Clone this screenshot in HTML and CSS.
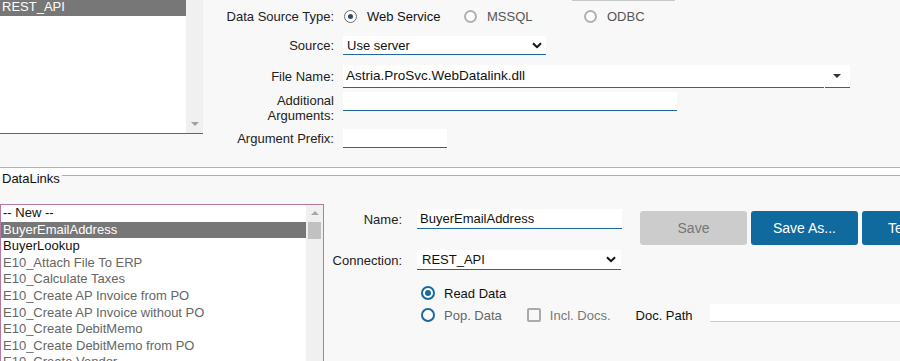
FILE: index.html
```html
<!DOCTYPE html>
<html>
<head>
<meta charset="utf-8">
<link rel="stylesheet" href="styles.css">
</head>
<body>
<div class="top">
  <div class="srclist">
    <div class="opts"><div class="opt sel">REST_API</div></div>
    <div class="sb sb-bottom"><span class="tri-down"></span></div>
  </div>
  <div class="form">
    <div class="frow r0"><div class="topline"></div></div>
    <div class="frow r1">
      <span class="lab">Data Source Type:</span>
      <div class="radios">
        <span class="ritem"><span class="radio on"></span><span class="rtext dark">Web Service</span></span>
        <span class="ritem"><span class="radio"></span><span class="rtext">MSSQL</span></span>
        <span class="ritem"><span class="radio"></span><span class="rtext">ODBC</span></span>
      </div>
    </div>
    <div class="frow r2">
      <span class="lab">Source:</span>
      <div class="selbox w203"><span>Use server</span>
        <svg class="chev" width="10" height="7" viewBox="0 0 10 7"><path d="M1 1.2 L5 5.2 L9 1.2" fill="none" stroke="#111" stroke-width="2"/></svg>
      </div>
    </div>
    <div class="frow r3">
      <span class="lab">File Name:</span>
      <div class="combo">
        <div class="cinp">Astria.ProSvc.WebDatalink.dll</div>
        <div class="cbtn"><span class="tri-dark"></span></div>
      </div>
    </div>
    <div class="frow r4">
      <span class="lab two">Additional<br>Arguments:</span>
      <div class="inp w334"></div>
    </div>
    <div class="frow r5">
      <span class="lab">Argument Prefix:</span>
      <div class="inp w104"></div>
    </div>
  </div>
</div>

<div class="divider"></div>
<div class="fshead"><span class="legend">DataLinks</span><span class="fsline"></span></div>

<div class="lower">
  <div class="dllist">
    <div class="opts">
      <div class="opt dark">-- New --</div>
      <div class="opt sel">BuyerEmailAddress</div>
      <div class="opt dark">BuyerLookup</div>
      <div class="opt">E10_Attach File To ERP</div>
      <div class="opt">E10_Calculate Taxes</div>
      <div class="opt">E10_Create AP Invoice from PO</div>
      <div class="opt">E10_Create AP Invoice without PO</div>
      <div class="opt">E10_Create DebitMemo</div>
      <div class="opt">E10_Create DebitMemo from PO</div>
      <div class="opt">E10_Create Vendor</div>
    </div>
    <div class="sb">
      <span class="tri-up"></span>
      <span class="thumb"></span>
    </div>
  </div>
  <div class="rp">
    <div class="rtop">
      <div class="fields">
        <span class="lab2">Name:</span>
        <div class="inp nameinp">BuyerEmailAddress</div>
        <span class="lab2">Connection:</span>
        <div class="selbox conn"><span>REST_API</span>
          <svg class="chev" width="10" height="7" viewBox="0 0 10 7"><path d="M1 1.2 L5 5.2 L9 1.2" fill="none" stroke="#111" stroke-width="2"/></svg>
        </div>
      </div>
      <div class="btns">
        <button class="btn dis">Save</button>
        <button class="btn pri">Save As...</button>
        <button class="btn pri test">Test</button>
      </div>
    </div>
    <div class="opts2">
      <div class="orow">
        <span class="radio blue on"></span><span class="otext dark">Read Data</span>
      </div>
      <div class="orow">
        <span class="radio blue"></span><span class="otext">Pop. Data</span>
        <span class="check"></span><span class="otext light">Incl. Docs.</span>
        <span class="doclab">Doc. Path</span>
        <div class="docinp"></div>
      </div>
    </div>
  </div>
</div>
</body>
</html>
```

FILE: styles.css
```css
* { box-sizing: border-box; }
body {
  margin: 0;
  background: #f8f8f8;
  font-family: "Liberation Sans", Arial, sans-serif;
  font-size: 13px;
  color: #222;
  width: 900px;
  height: 361px;
  overflow: hidden;
}

/* ---------- top ---------- */
.top { display: flex; height: 134px; }
.srclist {
  width: 203px;
  height: 134px;
  display: flex;
  background: #fff;
  border-bottom: 1px solid #2379ad;
  flex: none;
}
.srclist .opts { flex: 1; margin-top: -1px; }
.opt {
  height: 16.6px;
  line-height: 16.6px;
  padding-left: 2px;
  white-space: nowrap;
  color: #666;
}
.opt.dark { color: #111; }
.opt.sel { background: #777; color: #fff; }
.srclist .opt.sel { height: 17px; }

.sb {
  width: 17px;
  background: #f0f0f0;
  display: flex;
  flex-direction: column;
  align-items: center;
  flex: none;
}
.sb-bottom { justify-content: flex-end; padding-bottom: 7px; }
.tri-down {
  width: 0; height: 0;
  border-left: 4px solid transparent;
  border-right: 4px solid transparent;
  border-top: 4px solid #a0a0a0;
}
.tri-up {
  width: 0; height: 0;
  border-left: 4px solid transparent;
  border-right: 4px solid transparent;
  border-bottom: 4px solid #a8a8a8;
  margin-top: 6px;
}
.thumb {
  width: 13px;
  height: 17px;
  background: #c1c1c1;
  margin-top: 7px;
}

.form { flex: 1; }
.frow { display: flex; align-items: center; }
.lab {
  width: 131px;
  margin-right: 9px;
  text-align: right;
  flex: none;
  color: #222;
}
.r0 { height: 1px; }
.topline { margin-left: 369px; width: 103px; height: 1px; background: #c8c8c8; }
.r1 { margin-top: 4px; height: 22px; }
.r2 { margin-top: 9px; height: 19px; }
.r3 { margin-top: 10px; height: 23px; }
.r4 { margin-top: 4px; height: 31px; align-items: flex-start; }
.r5 { margin-top: 6px; height: 19px; }
.lab.two { line-height: 15px; margin-top: 1px; }

.radios { display: flex; }
.ritem { width: 120px; display: flex; align-items: center; }
.radio {
  width: 13px; height: 13px;
  border-radius: 50%;
  border: 2px solid #b0b0b0;
  background: #fff;
  flex: none;
  display: inline-flex;
  align-items: center;
  justify-content: center;
  margin-left: 1px;
}
.radio.on { border: 1.5px solid #6a6a6a; }
.radio.on::after {
  content: "";
  width: 5px; height: 5px;
  border-radius: 50%;
  background: #2b4c6e;
}
.rtext { margin-left: 10px; color: #555; }
.rtext.dark { color: #111; }

.selbox {
  height: 19px;
  background: #fff;
  border-bottom: 1px solid #1e6a9b;
  display: flex;
  align-items: center;
  justify-content: space-between;
  padding: 0 4px 0 4px;
  color: #111;
}
.w203 { width: 203px; }
.chev { display: block; }

.combo {
  display: flex;
  height: 23px;
  width: 507px;
  background: #fff;
}
.cinp {
  width: 481px;
  border-bottom: 1px solid #1e6a9b;
  padding-left: 3px;
  font-size: 13.5px;
  line-height: 21px;
  color: #111;
}
.cbtn {
  width: 25px;
  margin-left: 1px;
  border-bottom: 1px solid #1e6a9b;
  display: flex;
  align-items: center;
  justify-content: center;
  padding-right: 2px;
}
.tri-dark {
  width: 0; height: 0;
  border-left: 4px solid transparent;
  border-right: 4px solid transparent;
  border-top: 4px solid #333;
}

.inp {
  height: 19px;
  background: #fff;
  border-bottom: 1px solid #1e6a9b;
}
.w334 { width: 334px; }
.w104 { width: 104px; }

/* ---------- divider ---------- */
.divider {
  margin-top: 33px;
  height: 8px;
  border-top: 1px solid #88c0d0;
  background: #fff;
}
.fshead { display: flex; align-items: flex-start; height: 29px; }
.legend {
  margin-top: -4px;
  padding: 0 2px;
  line-height: 15px;
  color: #111;
  white-space: nowrap;
}
.fsline { flex: 1; border-top: 1px solid #88c0d0; }

/* ---------- lower ---------- */
.lower { display: flex; }
.dllist {
  width: 324px;
  height: 170px;
  border: 1px solid #b67aa2;
  background: #fff;
  display: flex;
  flex: none;
}
.dllist .opts { flex: 1; overflow: hidden; }

.rp { flex: 1; padding-top: 5px; }
.rtop { display: flex; align-items: flex-start; }
.fields {
  display: grid;
  grid-template-columns: 78px 205px;
  grid-template-rows: 20px 20px;
  column-gap: 15px;
  row-gap: 21px;
  align-items: center;
}
.lab2 { text-align: right; color: #222; }
.nameinp {
  height: 20px;
  padding-left: 3px;
  line-height: 19px;
  color: #111;
}
.conn { height: 20px; width: 204px; padding-left: 5px; padding-right: 5px; }

.btns { display: flex; gap: 4px; margin-left: 18px; margin-top: 2px; }
.btn {
  width: 107px;
  height: 34px;
  border: none;
  border-radius: 3px;
  font-family: "Liberation Sans", Arial, sans-serif;
  font-size: 14px;
  padding: 0;
  flex: none;
}
.btn.dis { background: #cccccc; color: #767676; }
.btn.pri { background: #106a9e; color: #fff; }
.btn.test { text-align: left; padding-left: 26px; }

.opts2 { padding-left: 97px; margin-top: 14px; }
.orow { display: flex; align-items: center; height: 18px; }
.orow + .orow { margin-top: 4px; }
.radio.blue { border: 2px solid #176a9e; width: 14px; height: 14px; margin-left: 0; }
.radio.blue.on::after { width: 6px; height: 6px; background: #176a9e; }
.otext { margin-left: 9px; color: #666; }
.otext.dark { color: #111; }
.otext.light { color: #777; }
.check {
  width: 14px; height: 14px;
  border: 2px solid #aaa;
  border-radius: 2px;
  background: #f8f8f8;
  margin-left: 25px;
  flex: none;
}
.doclab { margin-left: 25px; color: #111; }
.docinp {
  width: 190px;
  height: 18px;
  margin-left: 17px;
  background: #fff;
  border-bottom: 1px solid #ccc;
  align-self: flex-start;
  margin-top: -2px;
}
```
